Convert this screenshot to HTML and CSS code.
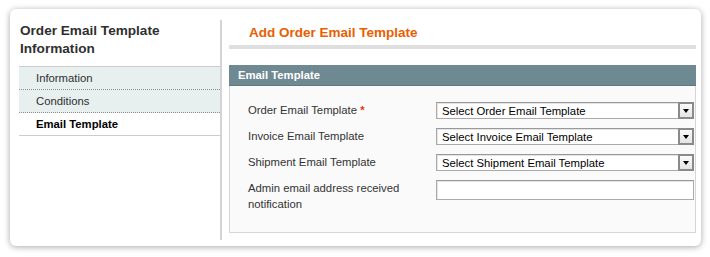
FILE: index.html
```html
<!DOCTYPE html>
<html lang="en">
<head>
    <meta charset="UTF-8">
    <title>Add Order Email Template</title>
    <link rel="stylesheet" href="styles.css">
</head>
<body>
    <div class="page">
        <div class="card">
            <aside class="side-col">
                <h3 class="side-title">Order Email Template Information</h3>
                <ul class="tabs">
                    <li><a href="#">Information</a></li>
                    <li><a href="#">Conditions</a></li>
                    <li class="active"><a href="#">Email Template</a></li>
                </ul>
            </aside>

            <main class="main-col">
                <div class="content-header">
                    <h3>Add Order Email Template</h3>
                </div>

                <div class="fieldset-head">Email Template</div>
                <div class="fieldset">
                    <div class="form-row">
                        <label>Order Email Template <span class="required">*</span></label>
                        <div class="select">
                            <span>Select Order Email Template</span>
                            <span class="select-btn"></span>
                        </div>
                    </div>
                    <div class="form-row">
                        <label>Invoice Email Template</label>
                        <div class="select">
                            <span>Select Invoice Email Template</span>
                            <span class="select-btn"></span>
                        </div>
                    </div>
                    <div class="form-row">
                        <label>Shipment Email Template</label>
                        <div class="select">
                            <span>Select Shipment Email Template</span>
                            <span class="select-btn"></span>
                        </div>
                    </div>
                    <div class="form-row">
                        <label>Admin email address received notification</label>
                        <input type="text" class="input-text">
                    </div>
                </div>
            </main>
        </div>
    </div>
</body>
</html>
```

FILE: styles.css
```css
/* General */
body {
    margin: 0;
    padding: 0;
    background: #fff;
    font-family: "Liberation Sans", Arial, sans-serif;
    font-size: 11.3px;
    color: #333;
}

.page {
    padding: 9px 9px 11px 10px;
}

/* Card */
.card {
    display: flex;
    height: 237px;
    box-sizing: border-box;
    padding: 11px 6px 6px 9px;
    background: #fff;
    border-radius: 6px;
    box-shadow: 0 1px 6px rgba(0, 0, 0, 0.35);
}

/* Left column */
.side-col {
    width: 201px;
    border-right: 2px solid #d4d4d4;
    flex-shrink: 0;
}

.side-title {
    margin: 0;
    padding: 2px 0 0 1px;
    font-size: 13.6px;
    line-height: 18px;
    color: #2f2f2f;
}

.tabs {
    list-style: none;
    margin: 8px 0 0;
    padding: 0;
    border-top: 1px solid #ccc;
}

.tabs li {
    height: 22px;
    line-height: 22px;
    background: #e7efef;
    border-bottom: 1px dotted #8f8f8f;
}

.tabs li a {
    display: block;
    padding-left: 17px;
    color: #2f2f2f;
    text-decoration: none;
}

.tabs li.active {
    background: #fff;
    border-bottom: 1px solid #ccc;
}

.tabs li.active a {
    font-weight: bold;
    color: #000;
}

/* Right column */
.main-col {
    flex-grow: 1;
    margin-left: 7px;
}

.content-header {
    height: 19px;
    padding: 6px 0 0 20px;
    border-bottom: 4px solid #dfdfdf;
}

.content-header h3 {
    margin: 0;
    font-size: 13.5px;
    line-height: 14px;
    color: #eb5e00;
}

.fieldset-head {
    margin-top: 16px;
    height: 20px;
    line-height: 20px;
    padding-left: 9px;
    background: #6f8992;
    border-bottom: 1px solid #5f7880;
    color: #fff;
    font-weight: bold;
}

.fieldset {
    background: #fafafa;
    border: 1px solid #d6d6d6;
    border-top: none;
    padding: 16px 1px 20px 18px;
}

.form-row {
    display: flex;
    align-items: flex-start;
    margin-bottom: 9px;
}

.form-row:last-child {
    margin-bottom: 0;
}

.form-row label {
    width: 188px;
    flex-shrink: 0;
    line-height: 16px;
    padding-top: 0;
}

.required {
    color: #eb340a;
    font-weight: bold;
}

/* Select boxes */
.select {
    display: flex;
    align-items: center;
    justify-content: space-between;
    width: 258px;
    height: 17px;
    box-sizing: border-box;
    border: 1px solid #aaa;
    border-top-color: #999;
    background: #fff;
    box-shadow: inset 1px 1px 0 #e4e4e4;
    color: #000;
    padding-left: 5px;
}

.select-btn {
    position: relative;
    width: 16px;
    height: 17px;
    margin-right: -1px;
    box-sizing: border-box;
    border: 2px solid #8a8a8a;
    background: linear-gradient(#fbfbfb, #e4e4e4);
}

.select-btn::after {
    content: "";
    position: absolute;
    left: 3px;
    top: 5px;
    border-left: 3px solid transparent;
    border-right: 3px solid transparent;
    border-top: 4px solid #000;
}

.input-text {
    width: 258px;
    height: 20px;
    box-sizing: border-box;
    margin: 0;
    border: 1px solid #aaa;
    border-top-color: #999;
    box-shadow: inset 1px 1px 0 #e4e4e4;
    background: #fff;
}
```
